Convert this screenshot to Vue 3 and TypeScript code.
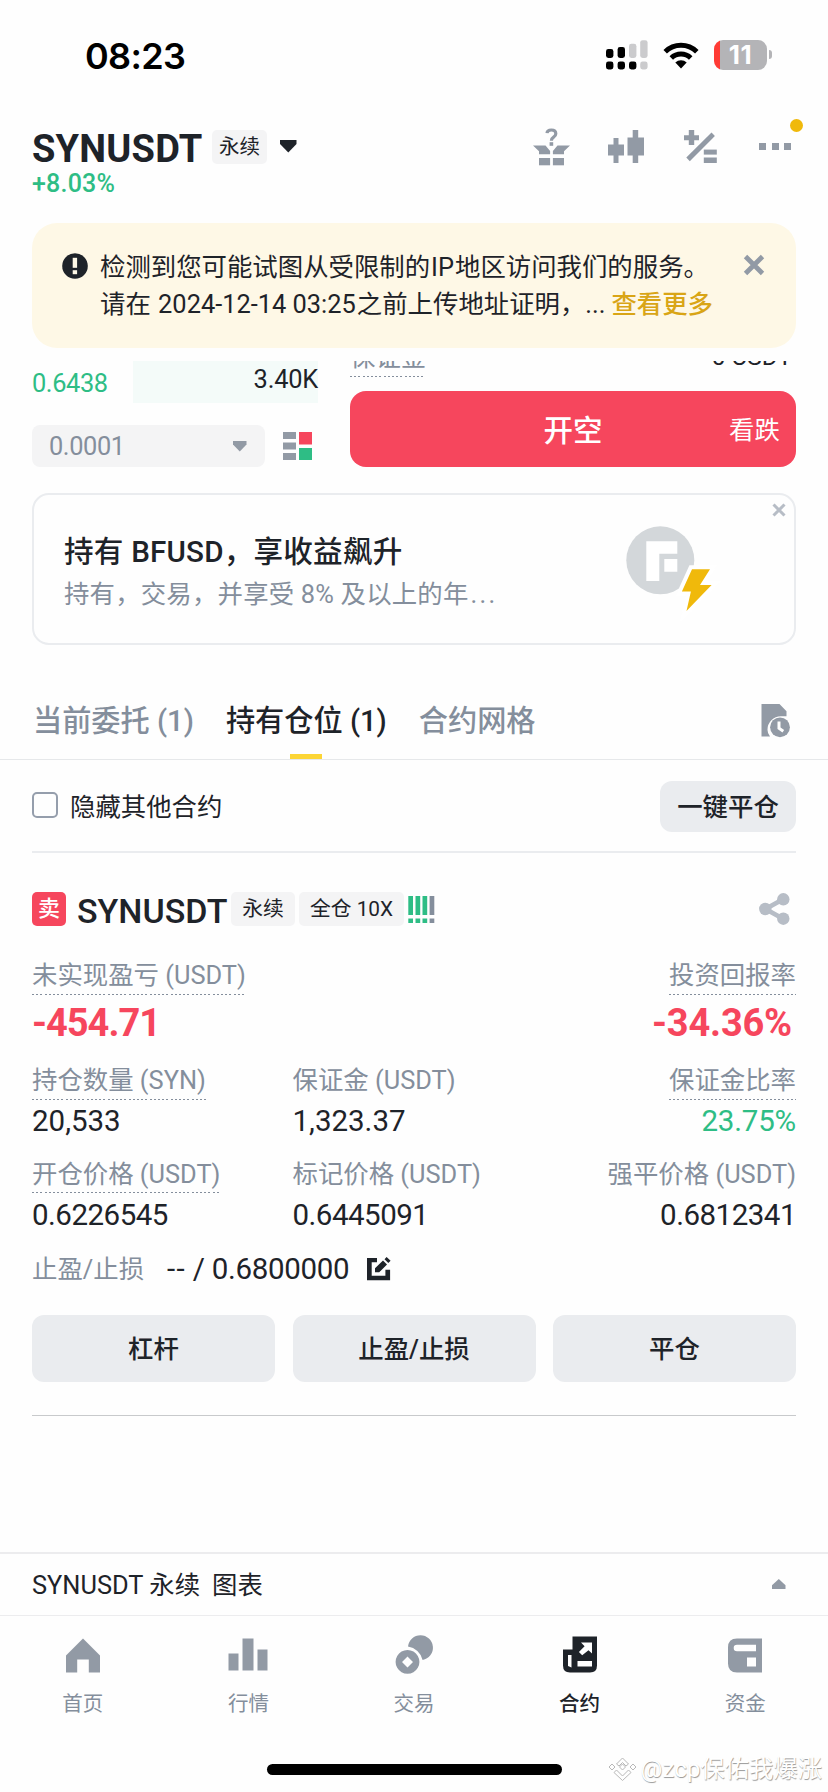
<script setup lang="ts">
interface Metric {
  label: string
  value: string
  dotted?: boolean
  tone?: string
}

interface NavItem {
  id: string
  label: string
  active?: boolean
}

const pnl: Metric[] = [
  { label: '未实现盈亏 (USDT)', value: '-454.71', dotted: true },
  { label: '投资回报率', value: '-34.36%', dotted: true },
]

const rows: Metric[][] = [
  [
    { label: '持仓数量 (SYN)', value: '20,533', dotted: true },
    { label: '保证金 (USDT)', value: '1,323.37' },
    { label: '保证金比率', value: '23.75%', dotted: true, tone: 'green' },
  ],
  [
    { label: '开仓价格 (USDT)', value: '0.6226545', dotted: true },
    { label: '标记价格 (USDT)', value: '0.6445091' },
    { label: '强平价格 (USDT)', value: '0.6812341' },
  ],
]

const actions: string[] = ['杠杆', '止盈/止损', '平仓']

const nav: NavItem[] = [
  { id: 'home', label: '首页' },
  { id: 'market', label: '行情' },
  { id: 'trade', label: '交易' },
  { id: 'futures', label: '合约', active: true },
  { id: 'wallet', label: '资金' },
]
</script>

<template>
  <div class="app">
    <div class="status">
      <span class="time">08:23</span>
      <div class="status-icons">
        <svg width="42" height="30" viewBox="0 0 42 30">
          <g fill="#000">
            <rect x="0" y="9" width="7.4" height="9" rx="2.4" />
            <rect x="11.6" y="7" width="7.4" height="11" rx="2.4" />
            <rect x="0" y="21.5" width="7.4" height="8" rx="2.4" />
            <rect x="11.6" y="21.5" width="7.4" height="8" rx="2.4" />
            <rect x="23" y="21.5" width="7.4" height="8" rx="2.4" />
          </g>
          <g fill="#cbcbcd">
            <rect x="23" y="3.8" width="7.4" height="14.2" rx="2.4" />
            <rect x="34.2" y="0.2" width="7.4" height="17.8" rx="2.4" />
            <rect x="34.2" y="21.5" width="7.4" height="8" rx="2.4" />
          </g>
        </svg>
        <svg class="wifi" width="36" height="27" viewBox="0 0 36 27">
          <g fill="none" stroke="#000" stroke-width="5">
            <path d="M2.2 9.8a22.6 22.6 0 0 1 31.6 0" />
            <path d="M8.3 16a13.9 13.9 0 0 1 19.4 0" />
          </g>
          <path d="M12.3 20.6a8.2 8.2 0 0 1 11.4 0L18 26.4z" fill="#000" />
        </svg>
        <div class="battery"><span>11</span></div>
        <i class="battery-cap"></i>
      </div>
    </div>

    <header class="header">
      <div class="pair">
        <div class="pair-line">
          <h1>SYNUSDT</h1>
          <span class="tag tag-top">永续</span>
          <svg class="pair-caret" width="17" height="13" viewBox="0 0 17 13"><path d="M0 0h16.5v4L8.3 12.5 0 4z" fill="#1e2329" /></svg>
        </div>
        <div class="change">+8.03%</div>
      </div>
      <div class="tools">
        <svg class="gift" width="37" height="38" viewBox="0 0 37 38" fill="#929aa5">
          <path d="M14 5.2Q14.3 2 18.3 2q4.5 0 4.5 3.7 0 2-2.2 3.4-2.2 1.4-2.2 3.6" fill="none" stroke="#929aa5" stroke-width="3.2" />
          <rect x="16.6" y="14.2" width="3.6" height="3.6" />
          <path d="M0 17.5h12.5l4.6 5.4v3.4H6v-3zM37 17.5H24.5l-4.6 5.4v3.4H31v-3z" />
          <rect x="6" y="30" width="11.1" height="7.3" /><rect x="19.9" y="30" width="11.1" height="7.3" />
        </svg>
        <svg class="candles" width="36" height="33" viewBox="0 0 36 33" fill="#929aa5">
          <path d="M5.5 8h5v6.500H16v11h-5.500V33h-5v-7.500H0v-11h5.500zM24.700 0h5.500v7.500H36v18h-5.800V33h-5.500v-7.500H19.500v-18h5.200z" />
        </svg>
        <svg class="calc" width="33" height="34" viewBox="0 0 33 34" fill="#929aa5">
          <path d="M4.800 0h5.400v5.300H15v5h-4.800V15H4.800v-4.700H0v-5h4.800z" />
          <path d="M27.500 2.500l3.400 3.500L5.800 31.200l-3.500-3.600z" />
          <rect x="19.800" y="19.600" width="13" height="5" /><rect x="19.800" y="27.500" width="13" height="5.500" />
        </svg>
        <div class="more"><i></i><i></i><i></i><b></b></div>
      </div>
    </header>

    <section class="notice">
      <svg class="notice-icon" width="26" height="26" viewBox="0 0 26 26"><circle cx="13" cy="13" r="12.800" fill="#1e2329" /><rect x="10.700" y="4.800" width="4.400" height="10" fill="#fef8e6" /><rect x="10.700" y="17.200" width="4.400" height="4" fill="#fef8e6" /></svg>
      <div class="notice-text">
        <p>检测到您可能试图从受限制的<span class="ip">IP</span>地区访问我们的服务。</p>
        <p>请在 <span class="date">2024-12-14 03:25</span>之前上传地址证明，<span class="dots">...</span><b>查看更多</b></p>
      </div>
      <svg class="notice-close" width="22" height="22" viewBox="0 0 22 22"><path d="M2.500 2.500l17 17m0-17l-17 17" stroke="#929aa5" stroke-width="4.800" /></svg>
    </section>

    <section class="order">
      <div class="book">
        <div class="book-row">
          <span class="price">0.6438</span>
          <span class="depth">3.40K</span>
        </div>
        <div class="book-foot">
          <div class="step">
            <span>0.0001</span>
            <svg width="14" height="11" viewBox="0 0 14 11"><path d="M0 0h13.500v3.600L6.800 10.500 0 3.600z" fill="#929aa5" /></svg>
          </div>
          <svg width="29" height="28" viewBox="0 0 29 28">
            <path d="M0 0h13v7H0zM0 10.500h13v7H0zM0 21h13v7H0z" fill="#929aa5" />
            <path d="M16 0h13v12.500H16z" fill="#f6465d" /><path d="M16 16h13v12H16z" fill="#2ebd85" />
          </svg>
        </div>
      </div>
      <div class="ticket">
        <div class="margin-row"><span class="label dotted">保证金</span><span class="avail">0 USDT</span></div>
        <button class="short"><strong>开空</strong><span>看跌</span></button>
      </div>
    </section>

    <section class="promo">
      <div class="promo-text">
        <h2>持有 BFUSD，享收益飙升</h2>
        <p>持有，交易，并享受 8% 及以上的年<span class="ellipsis">...</span></p>
      </div>
      <svg class="promo-art" width="88" height="88" viewBox="0 0 88 88">
        <circle cx="34.300" cy="34.300" r="34" fill="#d3d7da" />
        <path d="M20.300 15.300h31v12.500h-18V55h-13zM38.300 33h13v12.700h-13z" fill="#fff" />
        <path d="M66 43.200h18l-10 15.800h11.600L60.500 85l4.400-19.500h-9z" fill="#f0b90b" stroke="#fff" stroke-width="8" paint-order="stroke" />
      </svg>
      <svg class="promo-close" width="14" height="14" viewBox="0 0 14 14"><path d="M1.500 1.500l11 11m0-11l-11 11" stroke="#b7bdc6" stroke-width="3" /></svg>
    </section>

    <nav class="tabs">
      <span>当前委托 (1)</span>
      <span class="on">持有仓位 (1)</span>
      <span>合约网格</span>
      <svg width="30" height="34" viewBox="0 0 30 34">
        <path d="M.500 0H18.500l7 7.200v5H20A13.500 13.500 0 0 0 6.500 26q0 3.500 2.500 6.500H.500z" fill="#929aa5" />
        <circle cx="19" cy="23.300" r="9.900" fill="#929aa5" />
        <path d="M18 17.500v6.700l4.300 3" fill="none" stroke="#fff" stroke-width="3" />
      </svg>
    </nav>

    <section class="filter">
      <label><i class="check"></i><span>隐藏其他合约</span></label>
      <button>一键平仓</button>
    </section>

    <section class="position">
      <div class="pos-head">
        <span class="side">卖</span>
        <h3>SYNUSDT</h3>
        <span class="tag wide">永续</span>
        <span class="tag wide cross">全仓 10X</span>
        <svg width="27" height="27" viewBox="0 0 27 27">
          <path d="M.300 0h4.700v19H.300zM7.500 0h4.700v19H7.500zM14.500 0h4.700v19h-4.700zM.300 22.500h4.700V27H.300zM7.500 22.500h4.700V27H7.500zM14.500 22.500h4.700V27h-4.700z" fill="#2ebd85" />
          <path d="M21.600 0h4.700v19h-4.700zM21.600 22.500h4.700V27h-4.700z" fill="#848e9c" />
        </svg>
        <svg class="share" width="31" height="32" viewBox="0 0 31 32">
          <path d="M24.500 6L6.500 16l18 10" fill="none" stroke="#b7bdc6" stroke-width="4.800" />
          <g fill="#b7bdc6"><circle cx="24.300" cy="6.300" r="6.200" /><circle cx="6.300" cy="16" r="6.200" /><circle cx="24.300" cy="25.700" r="6.200" /></g>
        </svg>
      </div>

      <div class="pnl">
        <div v-for="m in pnl" :key="m.label" class="metric">
          <span class="label dotted">{{ m.label }}</span>
          <strong>{{ m.value }}</strong>
        </div>
      </div>

      <div v-for="(row, i) in rows" :key="i" class="metrics" :class="{ loose: i === 0 }">
        <div v-for="m in row" :key="m.label" class="metric">
          <span class="label" :class="{ dotted: m.dotted }">{{ m.label }}</span>
          <span class="value" :class="m.tone">{{ m.value }}</span>
        </div>
      </div>

      <div class="tpsl">
        <span class="label">止盈/止损</span>
        <span class="value"><span class="dashes">--</span> / 0.6800000</span>
        <svg width="25" height="24" viewBox="0 0 25 24" fill="#1e2329">
          <path d="M0 1h10v4.200H4.700v13.500h13.700v-6h4.700V23.300H0z" />
          <path d="M8 11.200L16 3.600l4 4-7.800 7.700H8zM17.500 2.300L19.600 0l4 3.800-2.300 2.300z" />
        </svg>
      </div>

      <div class="actions">
        <button v-for="a in actions" :key="a">{{ a }}</button>
      </div>
    </section>

    <div class="chart-bar">
      <span>SYNUSDT 永续</span><span class="chart">图表</span>
      <svg width="14" height="10" viewBox="0 0 14 10"><path d="M0 10V6.300L6.800 0l6.700 6.300V10z" fill="#929aa5" /></svg>
    </div>

    <footer class="bottom">
      <div v-for="n in nav" :key="n.id" class="nav-item" :class="{ active: n.active }">
        <svg width="40" height="36" viewBox="0 0 40 36" fill="#929aa5">
          <path v-if="n.id === 'home'" d="M20 .500L37 17.500V34.500H25.800v-13H14.200v13H3V17.500z" />
          <path v-else-if="n.id === 'market'" d="M.500 15.500h10v17h-10zM14.500.500h11v32h-11zM29.500 11.500H39.500v21h-10z" />
          <g v-else-if="n.id === 'trade'">
            <path d="M14 8.500A12.500 12.500 0 1 1 28.600 22A17.500 17.500 0 0 0 14 8.500z" />
            <path fill-rule="evenodd" d="M13.500 12a11.900 11.900 0 1 0 .01 0zM13.500 18.400l5.500 5.500-5.500 5.500L8 23.900z" />
          </g>
          <g v-else-if="n.id === 'futures'">
            <path d="M12.500-1.500H37V27.500Q37 34.500 30 34.500H10Q3 34.500 3 27.500V11.500h9.500z" fill="#1e2329" />
            <path d="M8 17h3.500v12.500L8 28zM17.500 23h14.500v5.500H17.500zM21 4.500h11v11l-3.500-3.300-6.300 5-3.300-3.300 5.700-5.700z" fill="#fff" />
          </g>
          <path v-else fill-rule="evenodd" d="M12 .500H37V34.500H12Q3 34.500 3 25.500V9.500Q3 .500 12 .500zM12 6.700a3.300 3.300 0 0 0 0 6.600h19V6.700zM22 19.500v9h9v-9z" />
        </svg>
        <span>{{ n.label }}</span>
      </div>
      <div class="home-bar"></div>
      <div class="mark">
        <svg width="29" height="24" viewBox="0 0 29 24" fill="none" stroke="#b8b8b8" stroke-width="1">
          <path d="M8.500 7L14.500 1l6 6-2.500 2-3.500-3.500L11 9zM1 10l3-3 3 3-3 3zM22 10l3-3 3 3-3 3zM11.500 10l3-3 3 3-3 3zM8.500 13l6 6 6-6 2.500 2.500-8.500 8-8.500-8z" />
        </svg>
        <span>@zcp保佑我爆涨</span>
      </div>
    </footer>
  </div>
</template>

<style>
body {
  background: #fff;
}
</style>

<style scoped>
.app {
  width: 828px;
  height: 1792px;
  overflow: hidden;
  background: #fefefe;
  color: #1e2329;
  font-family: Roboto, "Noto Sans CJK SC", sans-serif;
  font-size: 25.4px;
  display: flex;
  flex-direction: column;
}
.app * {
  box-sizing: border-box;
}
h1, h2, h3, p {
  margin: 0;
}
svg {
  display: block;
  flex: none;
  overflow: visible;
}
button {
  border: 0;
  padding: 0;
  color: inherit;
  font: inherit;
}
.status {
  height: 110px;
  display: flex;
  justify-content: space-between;
  padding: 0 56px 0 85px;
}
.time {
  margin-top: 34px;
  line-height: 44px;
  font-family: Inter, sans-serif;
  font-weight: 600;
  font-size: 36px;
  letter-spacing: -0.7px;
  color: #000;
}
.status-icons {
  display: flex;
  padding-top: 40px;
}
.wifi {
  margin: 2px 15px 0 15px;
}
.battery {
  width: 53px;
  height: 30px;
  border-radius: 9px;
  background: linear-gradient(90deg, #ff3b35 6px, #b4b4b7 6px);
  color: #fff;
  font: 700 26px/30px Inter, sans-serif;
  letter-spacing: 0.5px;
  text-align: center;
}
.battery-cap {
  width: 3px;
  height: 9px;
  margin: 10px 0 0 2px;
  border-radius: 0 5px 5px 0;
  background: #b4b4b7;
}
.header {
  height: 113px;
  display: flex;
  justify-content: space-between;
  padding: 0 36px 0 32px;
}
.pair {
  padding-top: 19px;
}
.pair-line {
  height: 40px;
  display: flex;
  align-items: center;
}
h1 {
  width: 180px;
  font-size: 38px;
  font-weight: 700;
  line-height: 40px;
  letter-spacing: 0.2px;
}
.tag {
  height: 34px;
  line-height: 34px;
  padding: 0 7px;
  border-radius: 5px;
  background: #f4f4f5;
  font-size: 20.5px;
}
.tag-top {
  margin-top: -4px;
}
.pair-caret {
  margin: -5px 0 0 13px;
}
.change {
  font-weight: 500;
  font-size: 25px;
  line-height: 30px;
  letter-spacing: 0.2px;
  color: #2ebd85;
}
.tools {
  display: flex;
  align-items: flex-start;
  padding-top: 20px;
}
.gift {
  margin: -2px 38px 0 0;
}
.candles {
  margin-right: 40px;
}
.calc {
  margin-right: 42px;
}
.more {
  position: relative;
  width: 33px;
  padding-top: 13px;
  display: flex;
  gap: 5.5px;
}
.more i {
  width: 7px;
  height: 7px;
  background: #929aa5;
}
.more b {
  position: absolute;
  left: 31px;
  top: -11px;
  width: 13px;
  height: 13px;
  border-radius: 50%;
  background: #f0b90b;
}
.notice {
  height: 125px;
  margin: 0 32px;
  border-radius: 25px;
  background: #fef8e6;
  display: flex;
}
.notice-icon {
  margin: 30px 12px 0 30px;
}
.notice-text {
  width: 622px;
  padding-top: 26px;
  white-space: nowrap;
  line-height: 37px;
}
.ip {
  margin: 0 1px;
}
.date {
  margin: 0 1px;
}
.dots {
  margin-right: 6px;
}
.notice b {
  font-weight: 500;
  color: #d9a516;
}
.notice-close {
  margin: 31px 0 0 21px;
}
.order {
  height: 106px;
  margin: 13px 32px 0;
  display: flex;
  justify-content: space-between;
  overflow: hidden;
}
.book {
  width: 286px;
}
.book-row {
  height: 42px;
  display: flex;
  justify-content: space-between;
}
.price {
  margin-top: 7px;
  line-height: 30px;
  letter-spacing: -0.4px;
  color: #2ebd85;
}
.depth {
  width: 185px;
  height: 42px;
  line-height: 36px;
  letter-spacing: -0.2px;
  background: #f4fbf9;
  text-align: right;
}
.book-foot {
  display: flex;
  align-items: center;
  justify-content: space-between;
  margin-top: 22px;
  padding-right: 6px;
}
.step {
  width: 233px;
  height: 42px;
  padding: 0 18px 0 17px;
  border-radius: 8px;
  background: #f4f4f5;
  color: #848e9c;
  letter-spacing: -0.4px;
  display: flex;
  align-items: center;
  justify-content: space-between;
}
.ticket {
  width: 446px;
}
.margin-row {
  height: 40px;
  margin-top: -24px;
  margin-bottom: 14px;
  display: flex;
  justify-content: space-between;
  padding-right: 4px;
  line-height: 40px;
}
.avail {
  font-size: 24.4px;
}
.short {
  width: 446px;
  height: 76px;
  padding-bottom: 3px;
  border-radius: 16px;
  background: #f6465d;
  color: #fff;
  display: grid;
  grid-template-columns: 90px 1fr 90px;
  align-items: center;
}
.short strong {
  grid-column: 2;
  font-size: 29.5px;
  font-weight: 500;
}
.short span {
  padding-left: 7px;
}
.promo {
  position: relative;
  height: 152px;
  margin: 26px 32px 0;
  padding: 0 0 0 30px;
  border: 2px solid #eaecef;
  border-radius: 17px;
  display: flex;
}
.promo-text {
  width: 562px;
  padding-top: 35px;
  white-space: nowrap;
}
h2 {
  font-size: 29.6px;
  font-weight: 500;
  line-height: 44px;
  letter-spacing: 0.2px;
}
.promo p {
  line-height: 40px;
  letter-spacing: 0.2px;
  color: #848e9c;
}
.ellipsis {
  margin-left: 2px;
  letter-spacing: 2.3px;
}
.promo-art {
  margin-top: 31px;
}
.promo-close {
  position: absolute;
  right: 8px;
  top: 8px;
}
.tabs {
  height: 115px;
  padding: 0 38px 0 33px;
  display: flex;
  gap: 32px;
  align-items: flex-end;
  border-bottom: 1.5px solid #e6e8ea;
  font-size: 29.2px;
  font-weight: 500;
  line-height: 76px;
  color: #848e9c;
  white-space: nowrap;
}
.tabs .on {
  color: #1e2329;
  height: 76px;
  background: linear-gradient(#fcd535, #fcd535) 50% 100% / 32px 5px no-repeat;
}
.tabs svg {
  margin: 0 -1px 21px auto;
}
.filter {
  height: 93px;
  margin: 0 32px;
  border-bottom: 2px solid #eaecef;
  display: flex;
  justify-content: space-between;
  padding-top: 21px;
}
.filter label {
  height: 51px;
  display: flex;
  align-items: center;
}
.filter label span {
  margin-top: -4px;
}
.check {
  width: 26px;
  height: 26px;
  margin: -3px 12px 0 0;
  border: 2px solid #959eac;
  border-radius: 5px;
}
.filter button {
  width: 136px;
  height: 51px;
  padding-bottom: 4px;
  border-radius: 12px;
  background: #eaecef;
  font-weight: 500;
}
.position {
  height: 563px;
  margin: 0 32px;
  padding-top: 39px;
  border-bottom: 1px solid #c8cacc;
}
.pos-head {
  height: 34px;
  display: flex;
  align-items: center;
}
.side {
  width: 34px;
  height: 34px;
  border-radius: 5px;
  background: #f6465d;
  color: #fff;
  font-size: 22px;
  font-weight: 500;
  line-height: 34px;
  text-align: center;
}
h3 {
  width: 154px;
  margin: 3px 0 0 11px;
  font-size: 34px;
  font-weight: 500;
  line-height: 34px;
}
.wide {
  width: 64px;
  padding: 0;
  font-size: 20.8px;
  text-align: center;
}
.cross {
  width: 105px;
  margin: 0 4px;
  white-space: nowrap;
}
.share {
  margin: 0 6px 0 auto;
}
.label {
  display: block;
  width: max-content;
  height: 40px;
  line-height: 40px;
  color: #848e9c;
}
.dotted {
  background: repeating-linear-gradient(90deg, #848e9c 0 2.1px, transparent 2.1px 4.2px) 0 100% / 100% 1.4px no-repeat;
}
.metric:last-child {
  justify-self: end;
  text-align: right;
}
.metric:last-child .label {
  margin-left: auto;
}
.pnl {
  display: grid;
  grid-template-columns: 1fr auto;
  height: 134px;
  padding-top: 29px;
}
.pnl strong {
  display: block;
  height: 56px;
  font-size: 38px;
  line-height: 56px;
  font-weight: 700;
  letter-spacing: -1px;
  color: #f6465d;
}
.pnl .metric:last-child strong {
  padding-right: 4px;
  letter-spacing: -0.2px;
}
.metrics {
  display: grid;
  grid-template-columns: 260.5px 1fr auto;
  height: 93.500px;
}
.value {
  display: block;
  height: 43px;
  font-size: 29.5px;
  line-height: 43px;
  letter-spacing: -0.5px;
}
.loose .value {
  letter-spacing: 0;
}
.loose .green {
  letter-spacing: -0.2px;
  color: #2ebd85;
}
.tpsl {
  height: 44px;
  display: flex;
  align-items: center;
}
.tpsl .value {
  margin: 0 18px 0 23px;
  white-space: pre;
  letter-spacing: -0.3px;
}
.dashes {
  letter-spacing: 1.2px;
}
.actions {
  display: grid;
  grid-template-columns: repeat(3, 1fr);
  gap: 17.5px;
  margin-top: 23.500px;
}
.actions button {
  height: 67.5px;
  padding-bottom: 3px;
  border-radius: 12px;
  background: #eaecef;
  font-weight: 500;
}
.chart-bar {
  height: 64px;
  margin-top: 136px;
  padding: 0 42px 4px 32px;
  border-top: 2px solid #ececee;
  border-bottom: 1px solid #ececee;
  display: flex;
  align-items: center;
}
.chart {
  margin-left: 12px;
}
.chart-bar svg {
  margin: 3px 0 0 auto;
}
.bottom {
  position: relative;
  flex: 1;
  display: grid;
  grid-template-columns: repeat(5, 1fr);
  padding-top: 22px;
}
.nav-item {
  display: flex;
  flex-direction: column;
  align-items: center;
  font-size: 20.5px;
  color: #848e9c;
}
.nav-item span {
  margin-top: 15px;
  line-height: 30px;
}
.active {
  color: #1e2329;
  font-weight: 500;
}
.home-bar {
  position: absolute;
  left: 267px;
  top: 148px;
  width: 295px;
  height: 11px;
  border-radius: 6px;
  background: #000;
}
.mark {
  position: absolute;
  right: 6px;
  top: 136px;
  display: flex;
  align-items: center;
  gap: 3px;
  color: #fff;
  font-size: 24.3px;
  line-height: 34px;
  white-space: nowrap;
  text-shadow: 0.6px 0.8px 0.8px #9a9a9a;
}
</style>
